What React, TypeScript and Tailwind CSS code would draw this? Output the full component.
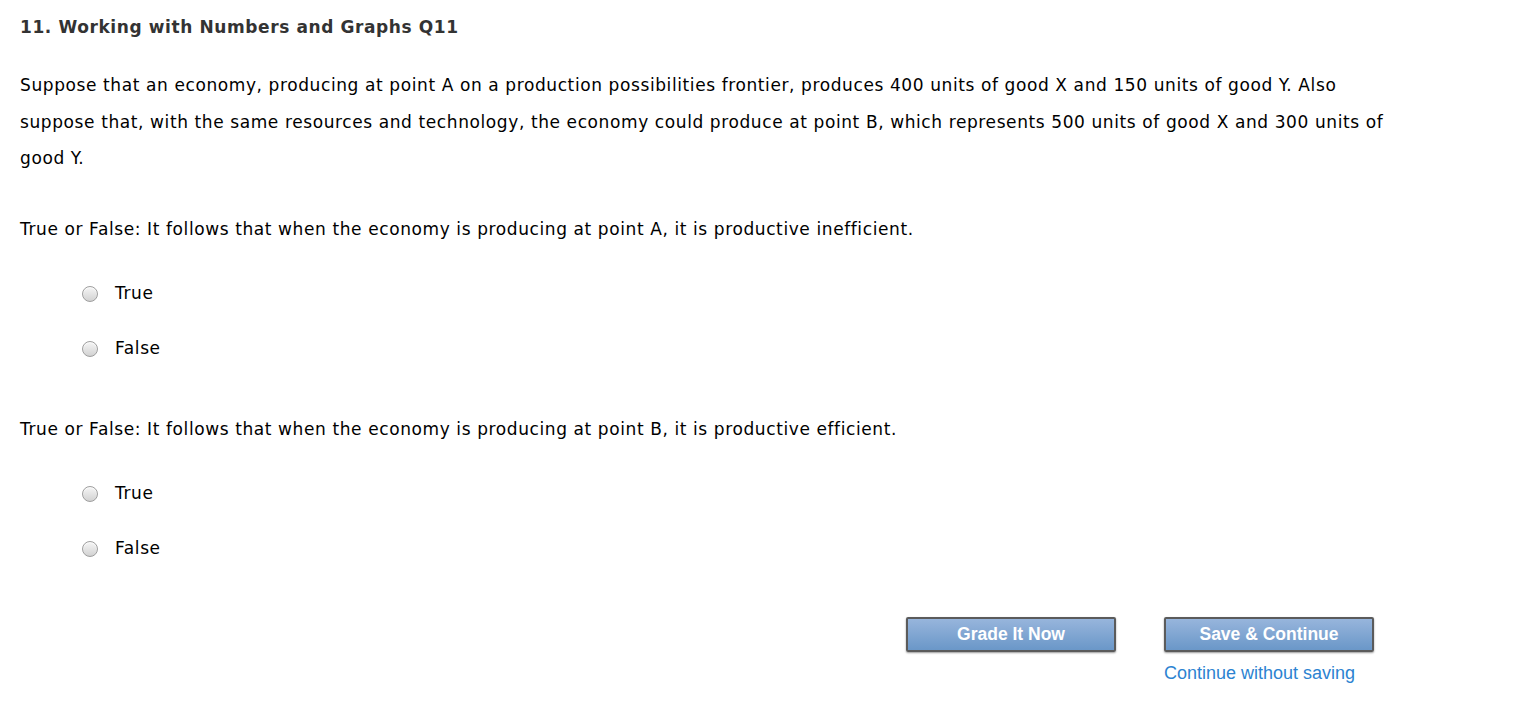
const verdana = { fontFamily: '"DejaVu Sans", Verdana, sans-serif' };
const arial = { fontFamily: '"Liberation Sans", Arial, Helvetica, sans-serif' };

function Radio({ label }: { label: string }) {
  return (
    <label className="flex h-[20px] items-center gap-[17px]">
      <span className="h-[16px] w-[16px] rounded-full border border-[#9e9e9e] bg-gradient-to-b from-[#f6f6f6] to-[#d2d2d2] shadow-[inset_0_1px_1px_rgba(255,255,255,0.8)]" />
      <span className="text-[17px] tracking-[0.6px] text-black">{label}</span>
    </label>
  );
}

function Question({ text }: { text: string }) {
  return (
    <div>
      <p className="text-[17px] leading-[20px] tracking-[0.6px] text-black">{text}</p>
      <div className="mt-[45px] flex flex-col gap-[35px] pl-[62px]">
        <Radio label="True" />
        <Radio label="False" />
      </div>
    </div>
  );
}

export default function App() {
  return (
    <div className="min-h-[715px] bg-white" style={verdana}>
      <div className="px-[20px] pt-[17px]">
        <h1 className="text-[17px] font-bold leading-[20px] tracking-[0.6px] text-[#333]">
          11. Working with Numbers and Graphs Q11
        </h1>
        <p className="mt-[30px] whitespace-nowrap text-[17px] leading-[36.5px] tracking-[0.6px] text-black">
          Suppose that an economy, producing at point A on a production possibilities frontier, produces 400 units of good X and 150 units of good Y. Also
          <br />
          suppose that, with the same resources and technology, the economy could produce at point B, which represents 500 units of good X and 300 units of
          <br />
          good Y.
        </p>
        <div className="mt-[42px] flex flex-col gap-[60px]">
          <Question text="True or False: It follows that when the economy is producing at point A, it is productive inefficient." />
          <Question text="True or False: It follows that when the economy is producing at point B, it is productive efficient." />
        </div>
        <div className="mt-[58px] flex justify-end gap-[48px] pr-[136px]" style={arial}>
          <button className="h-[35px] w-[210px] rounded-[2px] border-2 border-[#5b5b5b] bg-gradient-to-b from-[#97b5dc] to-[#6a97c8] text-[17.5px] font-bold text-white shadow-[0_1px_2px_rgba(0,0,0,0.4)]">
            Grade It Now
          </button>
          <div className="flex flex-col items-start gap-[11px]">
            <button className="h-[35px] w-[210px] rounded-[2px] border-2 border-[#5b5b5b] bg-gradient-to-b from-[#97b5dc] to-[#6a97c8] text-[17.5px] font-bold text-white shadow-[0_1px_2px_rgba(0,0,0,0.4)]">
              Save &amp; Continue
            </button>
            <a className="text-[18px] leading-[20px] text-[#2c83d1]">Continue without saving</a>
          </div>
        </div>
      </div>
    </div>
  );
}
